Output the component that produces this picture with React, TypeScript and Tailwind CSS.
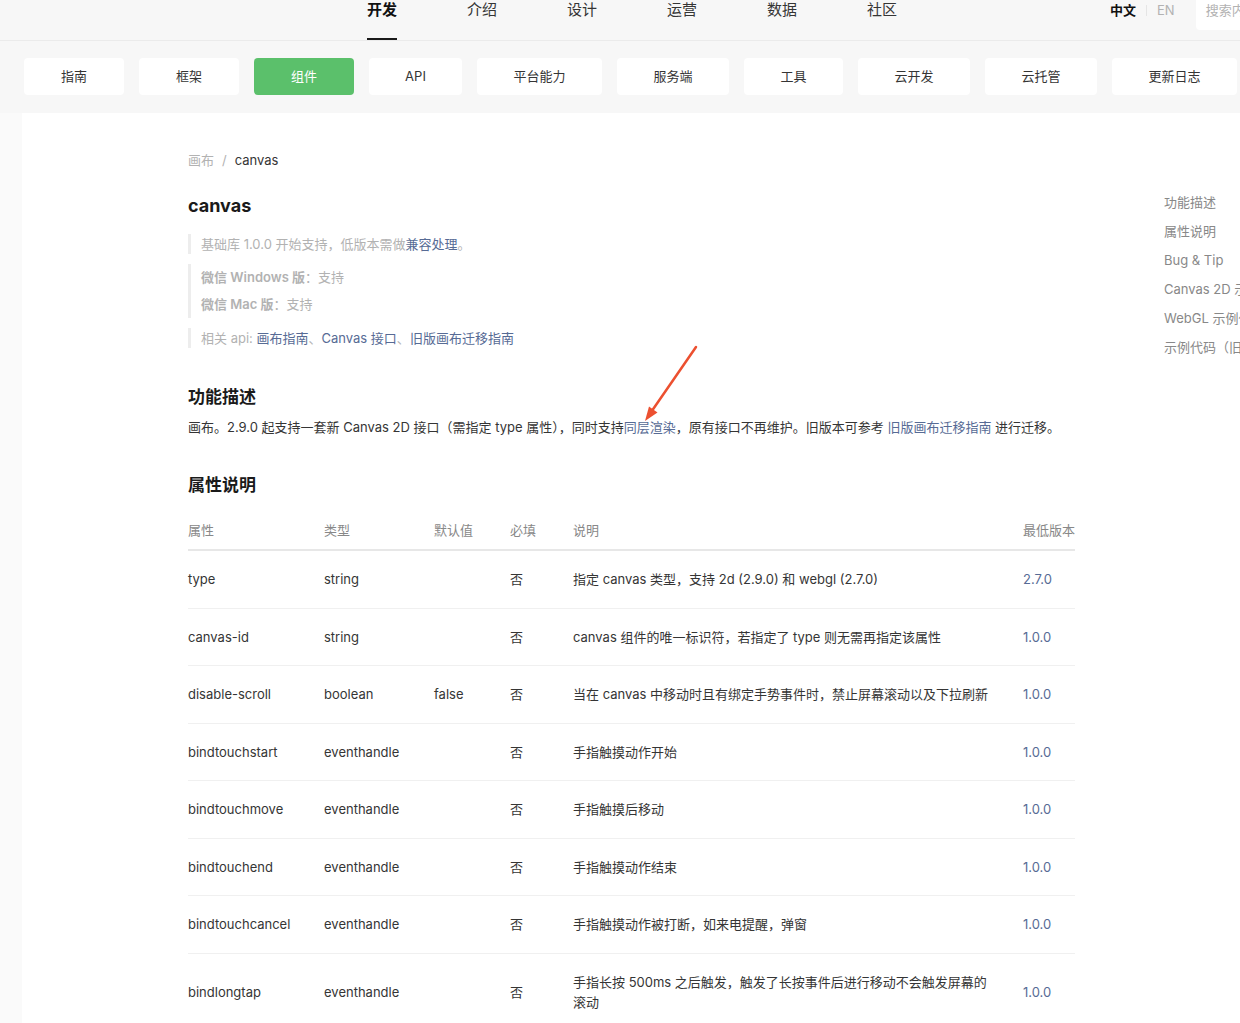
import React from "react";

const navItems = ["开发", "介绍", "设计", "运营", "数据", "社区"];
const tabs: { label: string; w: string; active?: boolean }[] = [
  { label: "指南", w: "w-[100px]" },
  { label: "框架", w: "w-[100px]" },
  { label: "组件", w: "w-[100px]", active: true },
  { label: "API", w: "w-[93px]" },
  { label: "平台能力", w: "w-[125px]" },
  { label: "服务端", w: "w-[112px]" },
  { label: "工具", w: "w-[99px]" },
  { label: "云开发", w: "w-[112px]" },
  { label: "云托管", w: "w-[112px]" },
  { label: "更新日志", w: "w-[125px]" },
];

const toc = ["功能描述", "属性说明", "Bug & Tip", "Canvas 2D 示例代码", "WebGL 示例代码", "示例代码（旧的接口）"];

type Row = { name: string; type: string; def: string; desc: React.ReactNode; ver: string };
const rows: Row[] = [
  { name: "type", type: "string", def: "", desc: "指定 canvas 类型，支持 2d (2.9.0) 和 webgl (2.7.0)", ver: "2.7.0" },
  { name: "canvas-id", type: "string", def: "", desc: "canvas 组件的唯一标识符，若指定了 type 则无需再指定该属性", ver: "1.0.0" },
  { name: "disable-scroll", type: "boolean", def: "false", desc: "当在 canvas 中移动时且有绑定手势事件时，禁止屏幕滚动以及下拉刷新", ver: "1.0.0" },
  { name: "bindtouchstart", type: "eventhandle", def: "", desc: "手指触摸动作开始", ver: "1.0.0" },
  { name: "bindtouchmove", type: "eventhandle", def: "", desc: "手指触摸后移动", ver: "1.0.0" },
  { name: "bindtouchend", type: "eventhandle", def: "", desc: "手指触摸动作结束", ver: "1.0.0" },
  { name: "bindtouchcancel", type: "eventhandle", def: "", desc: "手指触摸动作被打断，如来电提醒，弹窗", ver: "1.0.0" },
  {
    name: "bindlongtap",
    type: "eventhandle",
    def: "",
    desc: (
      <>
        手指长按 500ms 之后触发，触发了长按事件后进行移动不会触发屏幕的
        <br />
        滚动
      </>
    ),
    ver: "1.0.0",
  },
];

const cols = "grid grid-cols-[136px_110px_76px_63px_450px_52px]";

export default function App() {
  return (
    <div className="relative w-[1240px] h-[1023px] overflow-hidden bg-[#f7f7f7] font-['Inter','Noto_Sans_CJK_SC',sans-serif] text-[#353535]">
      {/* top nav */}
      <div className="flex h-[41px] border-b border-[#ebebeb] pl-[332px]">
        {navItems.map((n, i) => (
          <div key={n} className="relative w-[100px] shrink-0 h-[40px] flex justify-center">
            <span className={`relative text-[15px] leading-[20px] h-[40px] ${i === 0 ? "font-bold text-[#111]" : "text-[#353535]"}`}>
              {n}
              {i === 0 && <span className="absolute left-0 right-0 bottom-0 h-[2px] bg-[#1a1a1a]" />}
            </span>
          </div>
        ))}
        <div className="ml-[178px] flex shrink-0 items-start">
          <span className="text-[13px] leading-[20px] font-bold text-[#111]">中文</span>
          <span className="mx-[10px] mt-[5px] w-px h-[11px] bg-[#e5e5e5]" />
          <span className="text-[13px] leading-[20px] text-[#b2b2b2]">EN</span>
          <div className="ml-[21px] w-[120px] h-[30px] shrink-0 bg-white rounded-bl-[4px] pl-[10px] text-[13px] leading-[20px] text-[#b2b2b2]">
            搜索内容
          </div>
        </div>
      </div>

      {/* tabs */}
      <div className="flex gap-[15px] pl-[24px] pt-[17px] pb-[18px]">
        {tabs.map((t) => (
          <div
            key={t.label}
            className={`${t.w} shrink-0 h-[37px] rounded-[4px] flex items-center justify-center text-[13px] ${
              t.active ? "bg-[#5bc06b] text-white" : "bg-white text-[#353535]"
            }`}
          >
            {t.label}
          </div>
        ))}
      </div>

      {/* main */}
      <div className="flex h-[910px]">
        <div className="w-[22px] shrink-0 bg-[#fafafa]" />
        <div className="flex flex-1 bg-white">
          <div className="ml-[166px] w-[887px] shrink-0">
            <div className="mt-[37px] text-[13px] leading-[20px]">
              <span className="text-[#b2b2b2]">画布</span>
              <span className="text-[#b2b2b2] mx-[8px]">/</span>
              <span className="text-[#353535]">canvas</span>
            </div>
            <h1 className="mt-[23px] text-[18px] leading-[26px] font-bold text-[#1a1a1a]">canvas</h1>

            <div className="mt-[15px] border-l-[3px] border-[#ededed] pl-[10px] text-[13px] leading-[20px] text-[#b2b2b2]">
              基础库 1.0.0 开始支持，低版本需做<span className="text-[#576b95]">兼容处理</span>。
            </div>
            <div className="mt-[10px] border-l-[3px] border-[#ededed] pl-[10px] text-[13px] leading-[27px] text-[#b2b2b2]">
              <div>
                <span className="font-semibold">微信 Windows 版</span>：支持
              </div>
              <div>
                <span className="font-semibold">微信 Mac 版</span>：支持
              </div>
            </div>
            <div className="mt-[10px] border-l-[3px] border-[#ededed] pl-[10px] text-[13px] leading-[20px] text-[#b2b2b2]">
              相关 api: <span className="text-[#576b95]">画布指南</span>、<span className="text-[#576b95]">Canvas 接口</span>、
              <span className="text-[#576b95]">旧版画布迁移指南</span>
            </div>

            <h2 className="mt-[37px] text-[17px] leading-[24px] font-bold text-[#1a1a1a]">功能描述</h2>
            <p className="mt-[7px] text-[13px] leading-[22px] text-[#353535]">
              画布。2.9.0 起支持一套新 Canvas 2D 接口（需指定 type 属性），同时支持
              <span className="text-[#576b95]">同层渲染</span>，原有接口不再维护。旧版本可参考{" "}
              <span className="text-[#576b95]">旧版画布迁移指南</span> 进行迁移。
            </p>

            <h2 className="mt-[35px] text-[17px] leading-[24px] font-bold text-[#1a1a1a]">属性说明</h2>

            <div className="mt-[14px] text-[13px]">
              <div className={`${cols} border-b-2 border-[#e7e7e7] py-[9px] leading-[20px] text-[#888]`}>
                <div>属性</div>
                <div>类型</div>
                <div>默认值</div>
                <div>必填</div>
                <div>说明</div>
                <div>最低版本</div>
              </div>
              {rows.map((r) => (
                <div key={r.name} className={`${cols} items-center border-b border-[#f0f0f0] py-[18px] leading-[20.5px]`}>
                  <div>{r.name}</div>
                  <div>{r.type}</div>
                  <div>{r.def}</div>
                  <div>否</div>
                  <div className="pr-[30px]">{r.desc}</div>
                  <div className="text-[#576b95]">{r.ver}</div>
                </div>
              ))}
            </div>
          </div>

          <div className="ml-[89px] pt-[75px] shrink-0 whitespace-nowrap text-[13px] leading-[29px] text-[#888]">
            {toc.map((t) => (
              <div key={t}>{t}</div>
            ))}
          </div>
        </div>
      </div>

      {/* annotation arrow */}
      <svg className="absolute left-[640px] top-[343px] w-[62px] h-[82px] pointer-events-none" viewBox="0 0 62 82">
        <line x1="56" y1="4" x2="12.5" y2="67" stroke="#ec5030" strokeWidth="2.5" strokeLinecap="round" />
        <polygon points="5,78 17.5,69.5 9,63.5" fill="#ec5030" />
      </svg>
    </div>
  );
}
